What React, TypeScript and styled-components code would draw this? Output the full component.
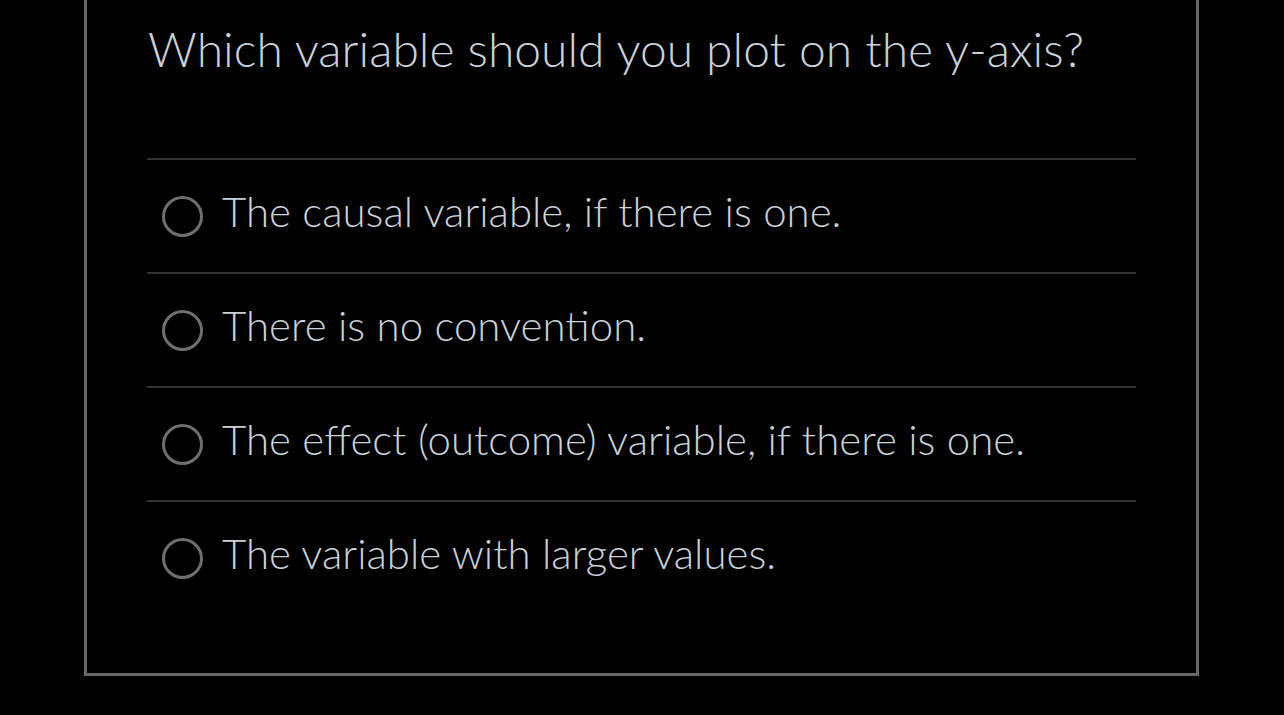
import React from 'react';
import styled, { createGlobalStyle } from 'styled-components';

const GlobalStyle = createGlobalStyle`
  html, body {
    margin: 0;
    padding: 0;
    background: #000;
  }
  body {
    font-family: "Lato Light", Lato, "Open Sans", sans-serif;
  }
`;

const Frame = styled.div`
  box-sizing: border-box;
  width: 1115px;
  margin-left: 84px;
  border: 3px solid #666;
  border-top: none;
  padding: 0 60px 59px;
`;

const Question = styled.h1`
  margin: 0;
  padding: 18px 0 78px 1px;
  font-size: 48px;
  font-weight: 300;
  line-height: 1.3;
  color: #c9d1d9;
`;

const OptionList = styled.div`
  display: flex;
  flex-direction: column;
`;

const Option = styled.label`
  display: flex;
  align-items: center;
  gap: 19px;
  height: 112px;
  padding-left: 15px;
  border-top: 2px solid #333;
  cursor: pointer;
`;

const Radio = styled.span`
  box-sizing: border-box;
  width: 41px;
  height: 41px;
  border-radius: 50%;
  border: 3px solid #6f6f72;
  flex-shrink: 0;
`;

const OptionText = styled.span`
  font-size: 42px;
  font-weight: 300;
  line-height: 1.2;
  color: #c9d1d9;
  margin-top: -10px;
`;

const options = [
  'The causal variable, if there is one.',
  'There is no convention.',
  'The effect (outcome) variable, if there is one.',
  'The variable with larger values.',
];

export default function App() {
  return (
    <>
      <GlobalStyle />
      <Frame>
        <Question>Which variable should you plot on the y-axis?</Question>
        <OptionList>
          {options.map((text) => (
            <Option key={text}>
              <Radio />
              <OptionText>{text}</OptionText>
            </Option>
          ))}
        </OptionList>
      </Frame>
    </>
  );
}
